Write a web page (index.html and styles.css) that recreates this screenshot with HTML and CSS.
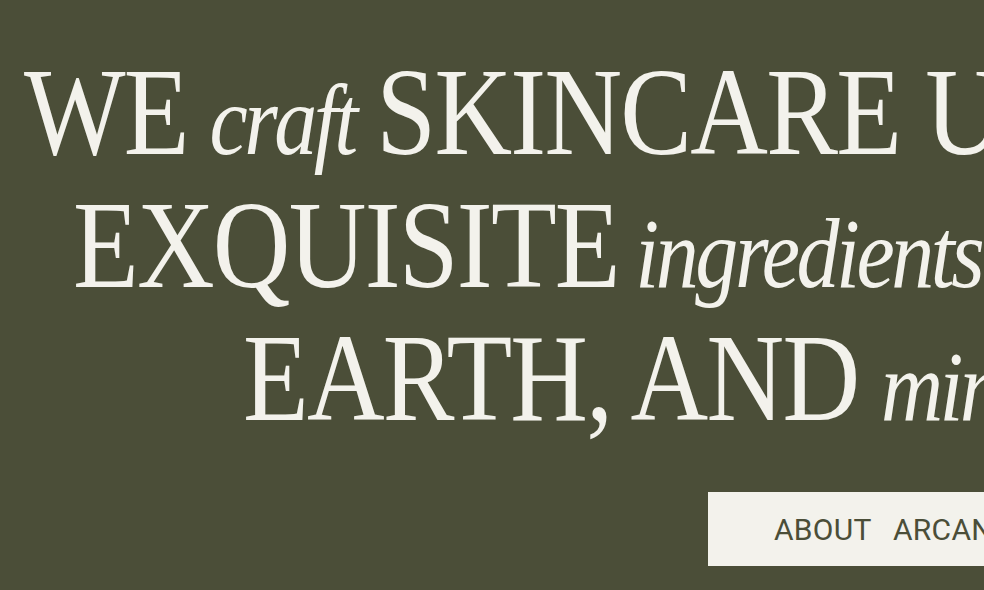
FILE: index.html
```html
<!DOCTYPE html>
<html lang="en">
<head>
<meta charset="utf-8">
<title>Arcana</title>
<link rel="stylesheet" href="styles.css">
</head>
<body>
<main class="hero">
  <h1 class="statement">
    <span class="line line-1"><span class="ink">WE <em>craft</em> SKINCARE USING</span></span>
    <span class="line line-2"><span class="ink">EXQUISITE <em>ingredients</em> FROM THE</span></span>
    <span class="line line-3"><span class="ink">EARTH, AND <em>minerals</em></span></span>
  </h1>
  <div class="actions">
    <a class="btn" href="#">ABOUT ARCANA</a>
  </div>
</main>
</body>
</html>
```

FILE: styles.css
```css
html, body {
  margin: 0;
  padding: 0;
  background: #4b4e38;
  overflow: hidden;
}
.hero {
  width: 984px;
  height: 590px;
  overflow: hidden;
  padding-top: 46px;
  box-sizing: border-box;
}
.statement {
  margin: 0;
  font-family: "Liberation Serif", "Times New Roman", serif;
  font-weight: 400;
  font-size: 125px;
  line-height: 133px;
  color: #f3f2ec;
  white-space: nowrap;
}
.line {
  display: block;
}
.ink {
  display: inline-block;
  transform: scaleX(0.86);
  transform-origin: left center;
  letter-spacing: -2px;
}
.ink em {
  font-style: italic;
  font-size: 0.8em;
  line-height: 1;
  letter-spacing: -4px;
}
.line-1 { padding-left: 24px; }
.line-1 em { margin-left: -4px; margin-right: -4px; }
.line-2 { padding-left: 73px; }
.line-2 em { margin-left: -10px; }
.line-3 { padding-left: 243px; }
.line-3 em { margin-left: -3px; }
.actions {
  margin-top: 47px;
  padding-left: 708px;
  white-space: nowrap;
}
.btn {
  display: inline-flex;
  align-items: center;
  height: 74px;
  padding: 0 66px;
  background: #f3f2ec;
  color: #4b4e38;
  font-family: Roboto, "Liberation Sans", sans-serif;
  font-size: 30px;
  letter-spacing: 0.3px;
  word-spacing: 14px;
  text-decoration: none;
}
```
